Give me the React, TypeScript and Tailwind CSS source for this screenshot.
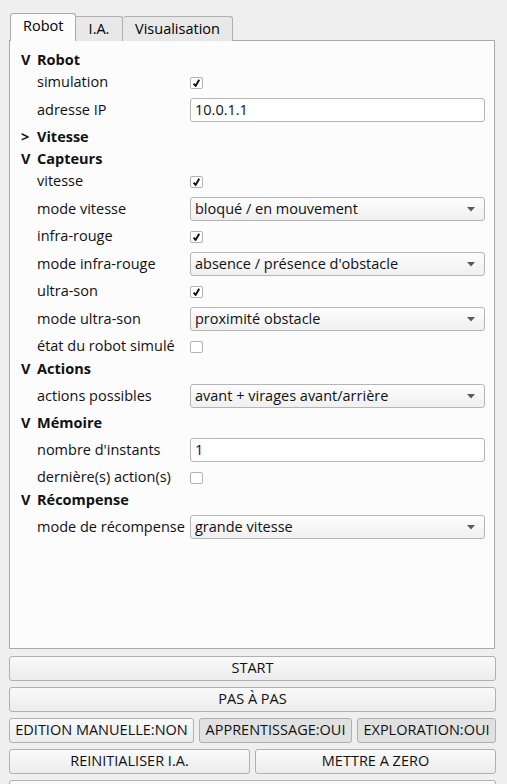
import React from "react";

type Row =
  | { kind: "header"; label: string; open: boolean }
  | { kind: "check"; label: string; checked: boolean }
  | { kind: "input"; label: string; value: string }
  | { kind: "select"; label: string; value: string };

const rows: Row[] = [
  { kind: "header", label: "Robot", open: true },
  { kind: "check", label: "simulation", checked: true },
  { kind: "input", label: "adresse IP", value: "10.0.1.1" },
  { kind: "header", label: "Vitesse", open: false },
  { kind: "header", label: "Capteurs", open: true },
  { kind: "check", label: "vitesse", checked: true },
  { kind: "select", label: "mode vitesse", value: "bloqué / en mouvement" },
  { kind: "check", label: "infra-rouge", checked: true },
  { kind: "select", label: "mode infra-rouge", value: "absence / présence d'obstacle" },
  { kind: "check", label: "ultra-son", checked: true },
  { kind: "select", label: "mode ultra-son", value: "proximité obstacle" },
  { kind: "check", label: "état du robot simulé", checked: false },
  { kind: "header", label: "Actions", open: true },
  { kind: "select", label: "actions possibles", value: "avant + virages avant/arrière" },
  { kind: "header", label: "Mémoire", open: true },
  { kind: "input", label: "nombre d'instants", value: "1" },
  { kind: "check", label: "dernière(s) action(s)", checked: false },
  { kind: "header", label: "Récompense", open: true },
  { kind: "select", label: "mode de récompense", value: "grande vitesse" },
];

function CheckBox({ checked }: { checked: boolean }) {
  return (
    <div className="w-[13px] h-[12px] border border-[#b3b3b3] rounded-[2px] bg-white flex items-center justify-center">
      {checked && (
        <svg width="11" height="10" viewBox="0 0 11 10">
          <path d="M2.6 5.6 L4.6 8 L8.2 1.8" fill="none" stroke="#111" strokeWidth="1.9" strokeLinejoin="round" />
        </svg>
      )}
    </div>
  );
}

function FormRow({ row }: { row: Row }) {
  if (row.kind === "header") {
    return (
      <div className="h-[22px] flex items-center pl-[11px] font-bold text-[#111]">
        <span className="w-[16px]">{row.open ? "V" : ">"}</span>
        <span>{row.label}</span>
      </div>
    );
  }
  const height = row.kind === "check" ? "h-[23px]" : "h-[32px]";
  return (
    <div className={`${height} flex items-center pl-[27px] pr-[9px] text-[#111]`}>
      <div className="w-[153px] shrink-0 whitespace-nowrap">{row.label}</div>
      {row.kind === "check" && <CheckBox checked={row.checked} />}
      {row.kind === "input" && (
        <div className="flex-1 h-[24px] border border-[#b5b5b5] rounded-[3px] bg-white flex items-center pl-[4px]">
          {row.value}
        </div>
      )}
      {row.kind === "select" && (
        <div className="flex-1 h-[24px] border border-[#b5b5b5] rounded-[3px] bg-linear-to-b from-[#fdfdfd] to-[#f0f0f0] flex items-center pl-[4px] pr-[9px]">
          <span className="flex-1 whitespace-nowrap">{row.value}</span>
          <svg width="8" height="5" viewBox="0 0 8 5">
            <path d="M0 0 H8 L4 4.5 Z" fill="#5a5a5a" />
          </svg>
        </div>
      )}
    </div>
  );
}

function Button({ label, checked = false, className = "" }: { label: string; checked?: boolean; className?: string }) {
  return (
    <div
      className={`h-[25px] border border-[#b0b0b0] rounded-[3px] flex items-center justify-center whitespace-nowrap text-[#111] ${
        checked ? "bg-[#e1e1e1]" : "bg-linear-to-b from-[#fafafa] to-[#ececec]"
      } ${className}`}
    >
      {label}
    </div>
  );
}

export default function App() {
  return (
    <div
      className="w-[507px] h-[784px] bg-[#efefef] overflow-hidden text-[14.5px] leading-none"
      style={{ fontFamily: '"Open Sans", "Noto Sans", sans-serif' }}
    >
      <div className="pt-[13px] pl-[9px] w-[495px]">
        {/* Tabs */}
        <div className="flex items-end h-[28px] pl-[1px] relative z-10">
          <div className="w-[66px] h-[28px] border border-b-0 border-[#aaaaaa] rounded-t-[3px] bg-[#fcfcfc] flex items-center pl-[12px] pb-[2px]">
            Robot
          </div>
          <div className="w-[47px] h-[25px] border border-l-0 border-b-0 border-[#b0b0b0] rounded-tr-[3px] bg-[#e8e8e8] flex items-center justify-center">
            I.A.
          </div>
          <div className="w-[110px] h-[25px] border border-l-0 border-b-0 border-[#b0b0b0] rounded-t-[3px] bg-[#e8e8e8] flex items-center justify-center">
            Visualisation
          </div>
        </div>
        {/* Panel */}
        <div className="-mt-px h-[609px] border border-[#aaaaaa] bg-[#fcfcfc] pt-[8px]">
          {rows.map((row, i) => (
            <FormRow key={i} row={row} />
          ))}
        </div>
      </div>

      {/* Buttons */}
      <div className="mt-[7px] ml-[9px] w-[487px] flex flex-col gap-[6px]">
        <Button label="START" />
        <Button label="PAS À PAS" />
        <div className="flex gap-[5px]">
          <Button label="EDITION MANUELLE:NON" className="w-[185px]" />
          <Button label="APPRENTISSAGE:OUI" checked className="w-[153px]" />
          <Button label="EXPLORATION:OUI" checked className="flex-1" />
        </div>
        <div className="grid grid-cols-2 gap-[5px]">
          <Button label="REINITIALISER I.A." />
          <Button label="METTRE A ZERO" />
        </div>
        <Button label="" />
      </div>
    </div>
  );
}
